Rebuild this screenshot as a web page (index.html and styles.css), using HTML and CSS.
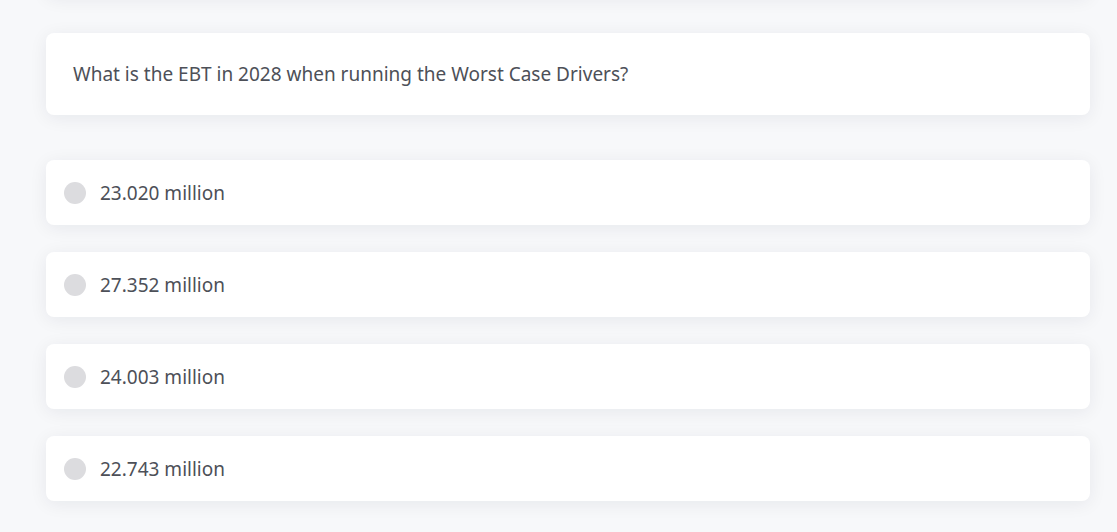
FILE: index.html
```html
<!DOCTYPE html>
<html>
<head>
<meta charset="utf-8">
<link rel="stylesheet" href="styles.css">
</head>
<body>
<div class="page">
  <div class="card card-prev"></div>
  <div class="card question">What is the EBT in 2028 when running the Worst Case Drivers?</div>
  <div class="options">
    <label class="card option"><span class="radio"></span><span class="opt-text">23.020 million</span></label>
    <label class="card option"><span class="radio"></span><span class="opt-text">27.352 million</span></label>
    <label class="card option"><span class="radio"></span><span class="opt-text">24.003 million</span></label>
    <label class="card option"><span class="radio"></span><span class="opt-text">22.743 million</span></label>
  </div>
</div>
</body>
</html>
```
FILE: styles.css
```css
html, body {
  margin: 0;
  padding: 0;
  height: 100%;
  overflow: hidden;
}
body {
  background: #f7f8fa;
  font-family: "Noto Sans", "Open Sans", sans-serif;
  color: #4d5058;
}
.page {
  padding: 0 27px 0 46px;
  display: flex;
  flex-direction: column;
}
.card {
  background: #ffffff;
  border-radius: 8px;
  box-shadow: 0 3px 18px rgba(20, 30, 50, 0.07);
}
.card-prev {
  height: 40px;
  margin-top: -44px;
}
.question {
  margin-top: 37px;
  height: 82px;
  box-sizing: border-box;
  padding: 0 27px;
  display: flex;
  align-items: center;
  font-size: 19px;
}
.options {
  margin-top: 45px;
  display: flex;
  flex-direction: column;
  gap: 27px;
}
.option {
  height: 65px;
  box-sizing: border-box;
  padding: 0 18px;
  display: flex;
  align-items: center;
  gap: 14px;
  font-size: 19px;
}
.radio {
  width: 22px;
  height: 22px;
  border-radius: 50%;
  background: #dcdcdf;
  flex: none;
}
```
